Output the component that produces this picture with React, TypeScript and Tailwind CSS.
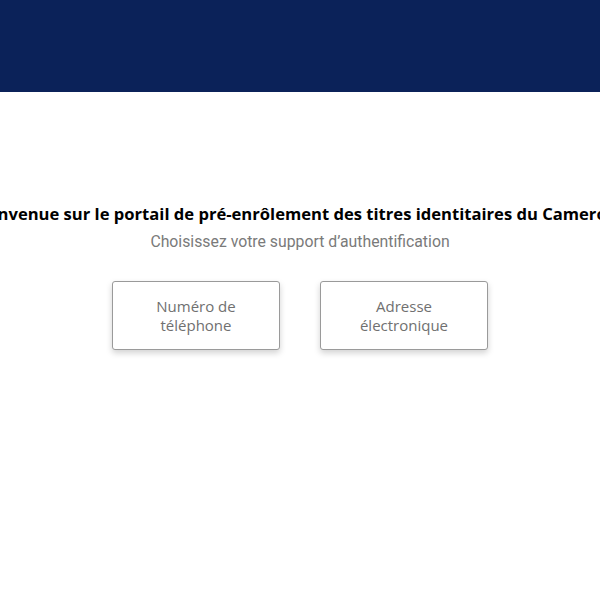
export default function App() {
  return (
    <div className="min-h-[600px] w-full overflow-hidden bg-white">
      <header className="h-[92px] w-full bg-[#0b2259]" />

      <main className="flex flex-col items-center pt-[110px]">
        <div className="flex w-full justify-center">
          <h1 className="whitespace-nowrap font-['Open_Sans',sans-serif] text-[16.6px] font-bold leading-[24px] text-black">
            Bienvenue sur le portail de pré-enrôlement des titres identitaires du Cameroun
          </h1>
        </div>
        <p className="mt-[6px] font-['Roboto',sans-serif] text-[15.8px] leading-[20px] text-[#7a7a7a]">
          Choisissez votre support d’authentification
        </p>

        <div className="mt-[29px] flex gap-[40px]">
          <button className="flex h-[69px] w-[168px] items-center justify-center rounded-[3px] border border-[#9a9a9a] bg-white font-['Open_Sans',sans-serif] text-[15px] leading-[19px] text-[#707070] shadow-[0_3px_6px_rgba(0,0,0,0.18)]">
            Numéro de
            <br />
            téléphone
          </button>
          <button className="flex h-[69px] w-[168px] items-center justify-center rounded-[3px] border border-[#9a9a9a] bg-white font-['Open_Sans',sans-serif] text-[15px] leading-[19px] text-[#707070] shadow-[0_3px_6px_rgba(0,0,0,0.18)]">
            Adresse
            <br />
            électronique
          </button>
        </div>
      </main>
    </div>
  );
}
